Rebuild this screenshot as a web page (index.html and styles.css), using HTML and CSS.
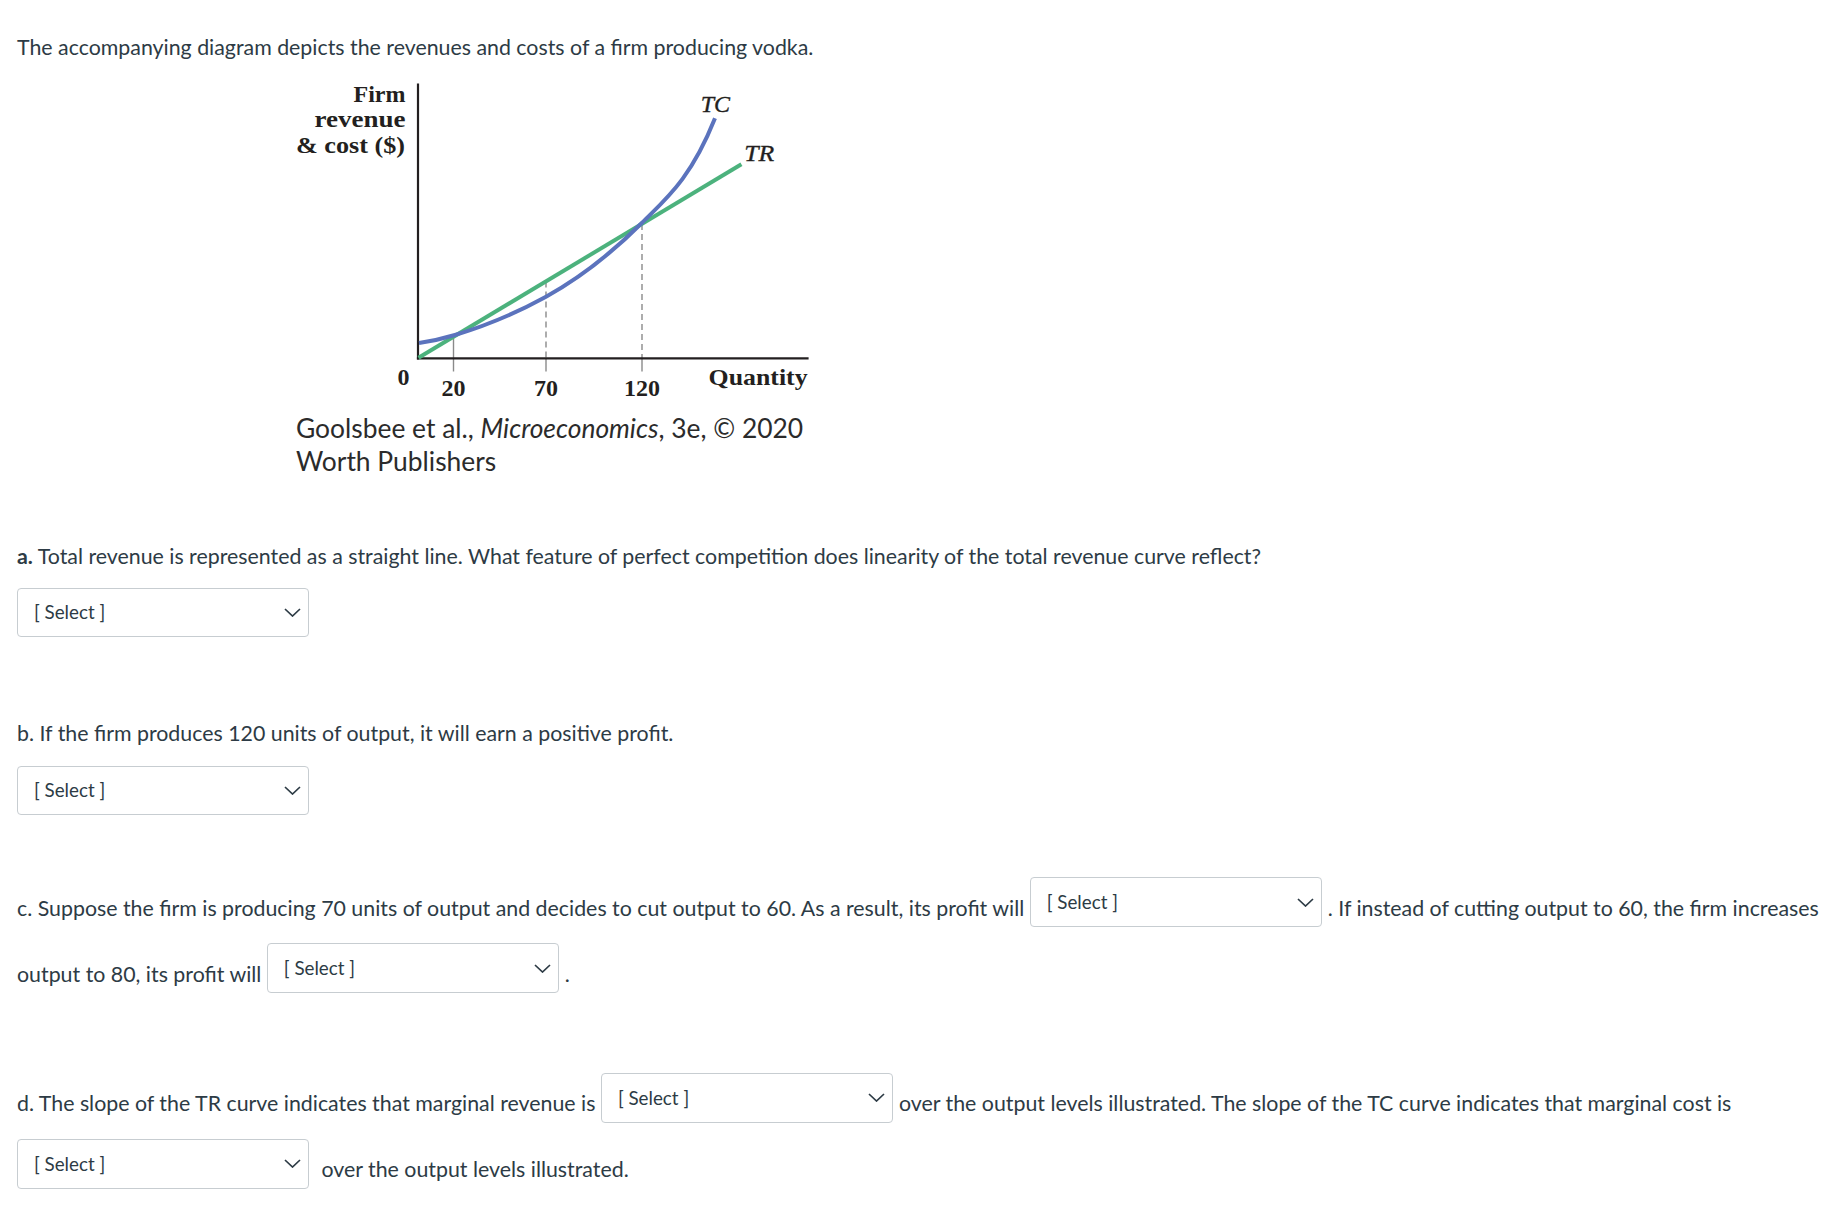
FILE: index.html
```html
<!DOCTYPE html>
<html lang="en">
<head>
<meta charset="utf-8">
<title>Vodka firm revenues and costs</title>
<link rel="stylesheet" href="styles.css">
</head>
<body>
<main class="page">
  <p class="intro">The accompanying diagram depicts the revenues and costs of a firm producing vodka.</p>

  <div class="figure">
    <svg class="chart" width="540" height="340" viewBox="280 72 540 340" xmlns="http://www.w3.org/2000/svg">
      <g class="axis-labels">
        <text x="405.5" y="101.7" text-anchor="end">Firm</text>
        <text x="405.5" y="127.3" text-anchor="end" textLength="91" lengthAdjust="spacingAndGlyphs">revenue</text>
        <text x="405" y="153.3" text-anchor="end" textLength="109" lengthAdjust="spacingAndGlyphs">&amp; cost ($)</text>
        <text x="403.5" y="385" text-anchor="middle">0</text>
        <text x="453.5" y="396" text-anchor="middle">20</text>
        <text x="546" y="396" text-anchor="middle">70</text>
        <text x="642" y="396" text-anchor="middle">120</text>
        <text x="708.6" y="385" textLength="99" lengthAdjust="spacingAndGlyphs">Quantity</text>
      </g>
      <g class="curve-labels">
        <text x="700.7" y="111.7">TC</text>
        <text x="744.3" y="160.7" textLength="30" lengthAdjust="spacingAndGlyphs">TR</text>
      </g>
      <g class="guides">
        <line x1="453.5" y1="336" x2="453.5" y2="371.5"/>
        <line x1="546" y1="281.5" x2="546" y2="358" class="dash"/>
        <line x1="546" y1="358" x2="546" y2="371.5"/>
        <line x1="642" y1="224" x2="642" y2="358" class="dash"/>
        <line x1="642" y1="358" x2="642" y2="371.5"/>
      </g>
      <g class="axes">
        <line x1="418" y1="83.5" x2="418" y2="359.4"/>
        <line x1="416.9" y1="358.3" x2="808.6" y2="358.3"/>
      </g>
      <line class="tr" x1="418.5" y1="357.7" x2="741.4" y2="164.3"/>
      <path class="tc" d="M419 343 C430 341.4 442.5 338.75 455 335 C485.3 325.9 515.7 313.4 546 296.7 C577.9 279.1 609.9 254.9 641.8 223 C666.2 198.6 690.6 179.3 715 118.3"/>
    </svg>
    <p class="caption">Goolsbee et al., <em>Microeconomics</em>, 3e, © 2020 Worth Publishers</p>
  </div>

  <p class="q q-a"><strong>a.</strong> Total revenue is represented as a straight line. What feature of perfect competition does linearity of the total revenue curve reflect?</p>
  <div class="select select-block select-a"><span class="select-text">[ Select ]</span><svg class="chev" width="17" height="9" viewBox="0 0 17 9"><path d="M1 1 L8.5 8 L16 1"/></svg></div>

  <p class="q q-b">b. If the firm produces 120 units of output, it will earn a positive profit.</p>
  <div class="select select-block select-b"><span class="select-text">[ Select ]</span><svg class="chev" width="17" height="9" viewBox="0 0 17 9"><path d="M1 1 L8.5 8 L16 1"/></svg></div>

  <p class="q q-inline q-c">c. Suppose the firm is producing 70 units of output and decides to cut output to 60. As a result, its profit will <span class="select select-inline"><span class="select-text">[ Select ]</span><svg class="chev" width="17" height="9" viewBox="0 0 17 9"><path d="M1 1 L8.5 8 L16 1"/></svg></span>. If instead of cutting output to 60, the firm increases output to 80, its profit will <span class="select select-inline"><span class="select-text">[ Select ]</span><svg class="chev" width="17" height="9" viewBox="0 0 17 9"><path d="M1 1 L8.5 8 L16 1"/></svg></span>.</p>

  <p class="q q-inline q-d">d. The slope of the TR curve indicates that marginal revenue is <span class="select select-inline"><span class="select-text">[ Select ]</span><svg class="chev" width="17" height="9" viewBox="0 0 17 9"><path d="M1 1 L8.5 8 L16 1"/></svg></span>over the output levels illustrated. The slope of the TC curve indicates that marginal cost is <span class="select select-inline select-spaced"><span class="select-text">[ Select ]</span><svg class="chev" width="17" height="9" viewBox="0 0 17 9"><path d="M1 1 L8.5 8 L16 1"/></svg></span> over the output levels illustrated.</p>
</main>
</body>
</html>
```

FILE: styles.css
```css
html, body {
  margin: 0;
  padding: 0;
  background: #ffffff;
}

.page {
  padding: 31px 8px 40px 17px;
  font-family: Lato, "Open Sans", sans-serif;
  font-size: 21.35px;
  line-height: 32px;
  color: #2d3b45;
}

.intro {
  margin: 0 0 9px 0;
}

.figure {
  margin: 0 0 0 263px;
  width: 560px;
}

.chart {
  display: block;
}

.axis-labels text {
  font-family: "Liberation Serif", "Times New Roman", serif;
  font-weight: bold;
  font-size: 24px;
  fill: #231f20;
}

.curve-labels text {
  font-family: "Liberation Serif", "Times New Roman", serif;
  font-style: italic;
  font-size: 24px;
  fill: #231f20;
  stroke: #231f20;
  stroke-width: 0.35;
}

.guides line {
  stroke: #8a8a8a;
  stroke-width: 1.4;
}

.guides .dash {
  stroke-dasharray: 6 4;
}

.axes line {
  stroke: #231f20;
  stroke-width: 2.2;
}

.tr {
  stroke: #4cb27d;
  stroke-width: 4;
  fill: none;
}

.tc {
  stroke: #5b73bd;
  stroke-width: 4;
  fill: none;
}

.caption {
  margin: 0;
  padding-left: 16px;
  width: 530px;
  font-size: 26.4px;
  line-height: 33.3px;
  color: #2b2b2b;
}

.q {
  margin: 0;
}

.q-a {
  margin-top: 61px;
}

.q-b {
  margin-top: 80px;
}

.select {
  box-sizing: border-box;
  height: 50px;
  width: 292px;
  border: 1px solid #c7cdd1;
  border-radius: 4px;
  background: #ffffff;
  padding: 0 7px 0 16px;
  align-items: center;
  justify-content: space-between;
  font-size: 18.8px;
  line-height: 22px;
  color: #2d3b45;
}

.select-block {
  display: flex;
  height: 49px;
}

.select-a {
  margin-top: 16px;
}

.select-b {
  margin-top: 17px;
}

.select-inline {
  display: inline-flex;
  vertical-align: 6.5px;
  margin: 0 6px 0 0;
}

.select-spaced {
  margin: 0 7px 0 0;
}

.chev path {
  fill: none;
  stroke: #2d3b45;
  stroke-width: 1.7;
}

.chev {
  display: block;
  flex: none;
}

.q-inline {
  line-height: 66px;
}

.q-c {
  margin-top: 60px;
}

.q-d {
  margin-top: 63.5px;
}
```
